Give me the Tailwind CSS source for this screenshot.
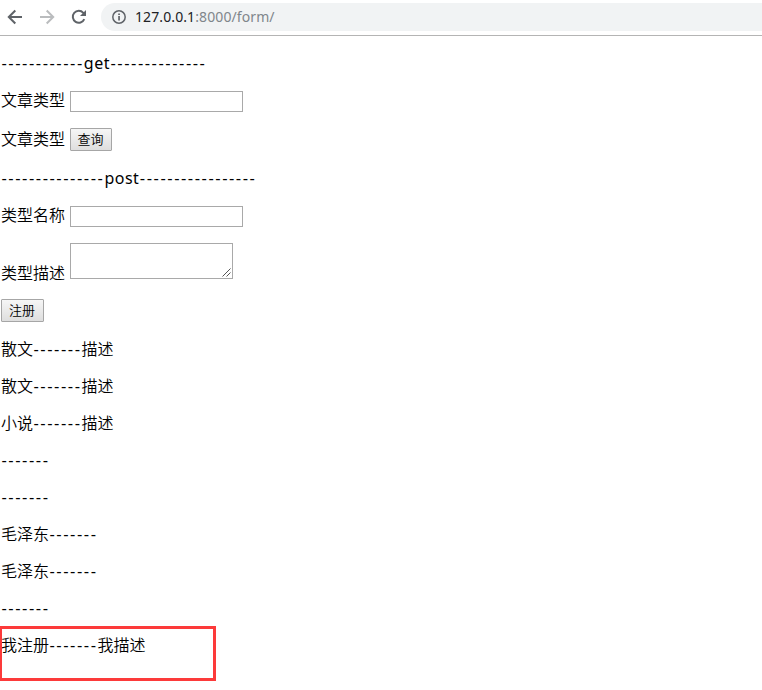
<!DOCTYPE html>
<html lang="zh-CN">
<head>
<meta charset="utf-8">
<title>form</title>
<script src="https://cdn.jsdelivr.net/npm/@tailwindcss/browser@4"></script>
</head>
<body class="h-[690px] overflow-hidden bg-white font-['Noto_Sans','Noto_Sans_CJK_SC',sans-serif] text-[16px] leading-[21px] font-[350] text-black">
<header class="flex h-9 items-start border-b border-[#b4b4b4] pt-[3px]">
  <svg class="ml-[7px] mt-[6px] h-4 w-4 shrink-0" viewBox="0 0 16 16" fill="none" stroke="#5f6368" stroke-width="2"><path d="M15 8H2M8.3 1.5 1.8 8l6.500 6.500"/></svg>
  <svg class="ml-[16px] mt-[6px] h-4 w-4 shrink-0" viewBox="0 0 16 16" fill="none" stroke="#babcbe" stroke-width="2"><path d="M1 8h13M7.700 1.500 14.200 8l-6.500 6.500"/></svg>
  <svg class="ml-[16px] mt-[6px] h-4 w-4 shrink-0" viewBox="0 0 16 16"><path d="M13.300 10.200A6 6 0 1 1 12.300 3.800L13.500 5" fill="none" stroke="#5f6368" stroke-width="2"/><path d="M15 1v6H9z" fill="#5f6368"/></svg>
  <div class="ml-[14px] flex h-7 flex-1 items-center rounded-l-full bg-[#f1f3f4] pl-[11px]">
    <svg class="h-[14px] w-[14px] shrink-0" viewBox="0 0 14 14"><circle cx="7" cy="7" r="6.200" fill="none" stroke="#5f6368" stroke-width="1.500"/><path d="M6.200 6h1.700v4.500H6.200zM6.200 3.500h1.700v1.600H6.200z" fill="#5f6368"/></svg>
    <span class="ml-[9px] whitespace-nowrap text-[14px] leading-7 font-normal tracking-[0.100px] text-[#202124]">127.0.0.1<span class="text-[#80868b]">:8000/form/</span></span>
  </div>
</header>
<main class="flex flex-col pl-px pt-[17px]">
  <p class="h-[21px] whitespace-nowrap"><span class="pl-[0.500px] font-['Liberation_Sans',sans-serif] tracking-[1.530px]">------------</span><span class="font-normal tracking-[0.500px]">get</span><span class="pl-[0.500px] font-['Liberation_Sans',sans-serif] tracking-[1.530px]">--------------</span></p>
  <div class="mt-[17px] flex h-[21px] items-start"><label class="-mt-px w-[69px]">文章类型</label><input class="h-[21px] w-[173px] border border-[#a9a9a9]"></div>
  <div class="mt-4 flex h-[23px] items-start"><span class="mt-px w-[69px]">文章类型</span><button class="h-[23px] w-[42px] rounded-[1px] border border-[#a6a6a6] bg-linear-to-b from-[#f6f6f6] to-[#dedede] pr-px text-[13px] leading-[21px]">查询</button></div>
  <p class="mt-[17px] h-[21px] whitespace-nowrap"><span class="pl-[0.500px] font-['Liberation_Sans',sans-serif] tracking-[1.530px]">---------------</span><span class="font-normal tracking-[0.500px]">post</span><span class="pl-[0.500px] font-['Liberation_Sans',sans-serif] tracking-[1.530px]">-----------------</span></p>
  <div class="mt-[17px] flex h-[21px] items-start"><label class="-mt-px w-[69px]">类型名称</label><input class="h-[21px] w-[173px] border border-[#a9a9a9]"></div>
  <div class="mt-4 flex h-[40px] items-start"><label class="mt-[20px] w-[69px]">类型描述</label>
    <div class="flex h-9 w-[163px] items-end justify-end border border-[#a9a9a9] p-px"><svg class="h-[9px] w-[9px]" viewBox="0 0 9 9" stroke="#555" stroke-width="1"><path d="M.5 8.500 8.500.5M4.500 8.500l4-4"/></svg></div>
  </div>
  <button class="mt-4 h-[23px] w-[43px] rounded-[1px] border border-[#a6a6a6] bg-linear-to-b from-[#f6f6f6] to-[#dedede] pr-px text-[13px] leading-[21px]">注册</button>
  <section class="mt-[17px] flex flex-col gap-4 whitespace-nowrap">
    <p class="h-[21px]">散文<span class="pl-[0.500px] font-['Liberation_Sans',sans-serif] tracking-[1.530px]">-------</span>描述</p>
    <p class="h-[21px]">散文<span class="pl-[0.500px] font-['Liberation_Sans',sans-serif] tracking-[1.530px]">-------</span>描述</p>
    <p class="h-[21px]">小说<span class="pl-[0.500px] font-['Liberation_Sans',sans-serif] tracking-[1.530px]">-------</span>描述</p>
    <p class="h-[21px]"><span class="pl-[0.500px] font-['Liberation_Sans',sans-serif] tracking-[1.530px]">-------</span></p>
    <p class="h-[21px]"><span class="pl-[0.500px] font-['Liberation_Sans',sans-serif] tracking-[1.530px]">-------</span></p>
    <p class="h-[21px]">毛泽东<span class="pl-[0.500px] font-['Liberation_Sans',sans-serif] tracking-[1.530px]">-------</span></p>
    <p class="h-[21px]">毛泽东<span class="pl-[0.500px] font-['Liberation_Sans',sans-serif] tracking-[1.530px]">-------</span></p>
    <p class="h-[21px]"><span class="pl-[0.500px] font-['Liberation_Sans',sans-serif] tracking-[1.530px]">-------</span></p>
    <div class="relative h-[21px]">我注册<span class="pl-[0.500px] font-['Liberation_Sans',sans-serif] tracking-[1.530px]">-------</span>我描述
      <div class="absolute -left-[2px] -top-[9px] h-[55px] w-[217px] border-[3px] border-[#fc3a3a]"></div>
    </div>
  </section>
</main>
</body>
</html>
